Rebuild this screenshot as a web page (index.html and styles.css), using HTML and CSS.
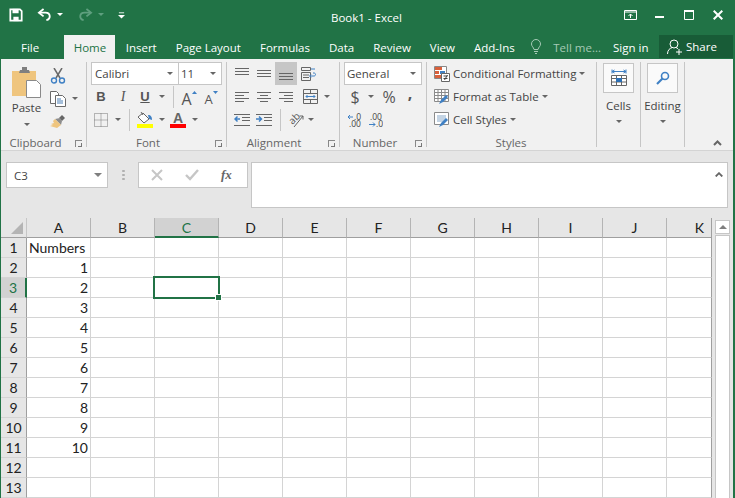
FILE: index.html
```html
<!DOCTYPE html>
<html lang="en">
<head>
    <meta charset="UTF-8">
    <title>Book1 - Excel</title>
    <link rel="stylesheet" href="styles.css">
</head>
<body>
<div class="window">
    <div class="titlebar">
        <div class="qat">
            <svg class="qat-save" width="14" height="14" viewBox="0 0 16 16"><path d="M1.500 1.500h11l2 2v11h-13z" fill="none" stroke="#fff" stroke-width="2"/><path d="M4 1h7v5H4z" fill="#fff"/><path d="M5 10h6v5H5z" fill="#fff"/></svg>
            <svg class="qat-undo" width="15" height="13" viewBox="0 0 16 14"><path d="M7 1L2 5l5 4" fill="none" stroke="#fff" stroke-width="2"/><path d="M3 5h6c6 0 6 7 1 8" fill="none" stroke="#fff" stroke-width="2"/></svg>
            <span class="caret caret-white"></span>
            <svg class="qat-redo" width="15" height="13" viewBox="0 0 16 14"><path d="M9 1l5 4-5 4" fill="none" stroke="#5f9f7f" stroke-width="2"/><path d="M13 5H7c-6 0-6 7-1 8" fill="none" stroke="#5f9f7f" stroke-width="2"/></svg>
            <span class="caret caret-dim"></span>
            <svg class="qat-more" width="7" height="8" viewBox="0 0 8 8"><path d="M1 1h6v1H1z" fill="#fff"/><path d="M0 4h8L4 8z" fill="#fff"/></svg>
        </div>
        <div class="title">Book1 - Excel</div>
        <div class="winbtns">
            <svg width="13" height="10" viewBox="0 0 13 10"><path d="M.5.500h12v9H.5z" fill="none" stroke="#fff"/><path d="M1 2h11" stroke="#fff"/><path d="M6.500 8V4M4.500 6l2-2 2 2" fill="none" stroke="#fff"/></svg>
            <svg class="win-min" width="9" height="2" viewBox="0 0 9 2"><path d="M0 0h9v2H0z" fill="#fff"/></svg>
            <svg class="win-max" width="10" height="10" viewBox="0 0 10 10"><path d="M.5 1.500h9v8h-9z" fill="none" stroke="#fff"/><path d="M0 0h10v2H0z" fill="#fff"/></svg>
            <svg class="win-close" width="10" height="10" viewBox="0 0 10 10"><path d="M.7.700l8.600 8.600M9.300.700L.7 9.300" stroke="#fff" stroke-width="2"/></svg>
        </div>
    </div>

    <div class="tabbar">
        <span class="tab tab-file">File</span>
        <span class="tab tab-active">Home</span>
        <span class="tab">Insert</span>
        <span class="tab">Page Layout</span>
        <span class="tab">Formulas</span>
        <span class="tab">Data</span>
        <span class="tab">Review</span>
        <span class="tab">View</span>
        <span class="tab">Add-Ins</span>
        <span class="tellme">
            <svg width="10" height="16" viewBox="0 0 10 16"><path d="M3 10.500C2.500 8 .5 7.500 .5 5a4.500 4.500 0 0 1 9 0c0 2.500-2 3-2.500 5.500z" fill="none" stroke="#a5c9b5"/><path d="M3 12.500h4M4 14.500h2" stroke="#a5c9b5"/></svg>
            Tell me...
        </span>
        <span class="signin">Sign in</span>
        <span class="share">
            <svg width="16" height="16" viewBox="0 0 16 16"><circle cx="7" cy="5" r="4" fill="none" stroke="#fff"/><path d="M.5 15c0-4 2.500-6 5-6.500M8.500 8.500c1 .2 1.800.6 2.500 1.200" fill="none" stroke="#fff"/><path d="M9 13h6M12 10v6" stroke="#fff"/></svg>
            Share
        </span>
    </div>

    <div class="ribbon">
        <div class="group group-clipboard">
            <div class="group-body clipboard-body">
                <div class="paste">
                    <svg width="30" height="32" viewBox="0 0 30 32"><path d="M0 4h24v25H0z" fill="#efc57e"/><path d="M8 3h2V0h5v3h2l1 3H7z" fill="#7f7f7f"/><path d="M14.500 13.500h10l4 4v13h-14z" fill="#fff" stroke="#8a8a8a"/></svg>
                    <span class="paste-label">Paste</span>
                    <span class="caret"></span>
                </div>
                <div class="clip-tools">
                    <div class="clip-row"><svg width="16" height="16" viewBox="0 0 16 16"><path d="M4 0l6 10M12 0L6 10" stroke="#6a6a6a" stroke-width="1.500" fill="none"/><circle cx="4" cy="12.500" r="2.500" fill="none" stroke="#3f80c4" stroke-width="1.400"/><circle cx="12" cy="12.500" r="2.500" fill="none" stroke="#3f80c4" stroke-width="1.400"/></svg></div>
                    <div class="clip-row"><svg width="16" height="16" viewBox="0 0 16 16"><path d="M.5.500h6l2 2v10h-8z" fill="#fff" stroke="#6a6a6a"/><path d="M5.500 4.500h7l3 3v8h-10z" fill="#fff" stroke="#6a6a6a"/><path d="M7 8h4M7 10h6M7 12h6" stroke="#4a7fb5"/></svg><span class="caret clip-caret"></span></div>
                    <div class="clip-row"><svg width="16" height="15" viewBox="0 0 16 15"><path d="M9 4l3-3 3 3-3 3z" fill="#666"/><path d="M5 5l5-1 2 3-1 4z" fill="#8d8d8d"/><path d="M5 5l6 6-4 3-7-2 3-1-2-1 3-1-1-2z" fill="#efc57e"/></svg></div>
                </div>
            </div>
            <div class="group-label">Clipboard<span class="launcher"></span></div>
        </div>

        <div class="group group-font">
            <div class="group-body">
                <div class="tool-row">
                    <div class="combo combo-font"><span>Calibri</span><span class="caret"></span></div>
                    <div class="combo combo-size"><span>11</span><span class="caret"></span></div>
                </div>
                <div class="tool-row">
                    <span class="btn btn-letter bold">B</span>
                    <span class="btn btn-letter italic">I</span>
                    <span class="btn btn-letter under">U</span>
                    <span class="caret-box w12"><span class="caret"></span></span>
                    <span class="vsep w10"></span>
                    <span class="btn btn-grow">A<svg width="5" height="3" viewBox="0 0 5 3"><path d="M0 3h5L2.500 0z" fill="#3f80c4"/></svg></span>
                    <span class="btn btn-shrink">A<svg width="5" height="3" viewBox="0 0 5 3"><path d="M0 0h5L2.500 3z" fill="#3f80c4"/></svg></span>
                </div>
                <div class="tool-row">
                    <span class="btn"><svg width="14" height="14" viewBox="0 0 14 14"><path d="M.5.500h13v13H.5zM7 .500v13M.5 7h13" fill="none" stroke="#777" stroke-dasharray="1 1"/></svg></span>
                    <span class="caret-box w12"><span class="caret"></span></span>
                    <span class="vsep w10"></span>
                    <span class="btn btn-color">
                        <svg width="16" height="12" viewBox="0 0 16 12"><path d="M6 1l6 6-5 4-6-6z" fill="#fff" stroke="#666"/><path d="M4 0l2 3" stroke="#666"/><path d="M11 3c3 0 4 2 4 5l-3-1z" fill="#3f80c4"/></svg>
                        <span class="colorbar colorbar-fill"></span>
                    </span>
                    <span class="caret-box w11"><span class="caret"></span></span>
                    <span class="btn btn-color">
                        <span class="font-a">A</span>
                        <span class="colorbar colorbar-font"></span>
                    </span>
                    <span class="caret-box w11"><span class="caret"></span></span>
                </div>
            </div>
            <div class="group-label">Font<span class="launcher"></span></div>
        </div>

        <div class="group group-align">
            <div class="group-body">
                <div class="tool-row">
                    <span class="btn"><svg width="14" height="14" viewBox="0 0 14 14"><path d="M0 1.500h14M0 4.500h14M0 7.500h14" stroke="#666"/></svg></span>
                    <span class="btn"><svg width="14" height="14" viewBox="0 0 14 14"><path d="M0 3.500h14M0 6.500h14M0 9.500h14" stroke="#666"/></svg></span>
                    <span class="btn btn-on"><svg width="14" height="14" viewBox="0 0 14 14"><path d="M0 6.500h14M0 9.500h14M0 12.500h14" stroke="#666"/></svg></span>
                    <span class="btn btn-wrap"><svg width="16" height="14" viewBox="0 0 16 14"><path d="M.5.500h9v3h-9zM.5 5.500h9v8h-9z" fill="none" stroke="#666"/><path d="M2 8h6M2 10.500h6" stroke="#666"/><path d="M10 2h4M9 9h4c2 0 2-3 0-3h-1M10 7.500L8.500 9l1.500 1.500" fill="none" stroke="#3f80c4"/></svg></span>
                </div>
                <div class="tool-row">
                    <span class="btn"><svg width="14" height="14" viewBox="0 0 14 14"><path d="M0 2.500h14M0 5.500h9M0 8.500h14M0 11.500h9" stroke="#666"/></svg></span>
                    <span class="btn"><svg width="14" height="14" viewBox="0 0 14 14"><path d="M0 2.500h14M3 5.500h8M0 8.500h14M3 11.500h8" stroke="#666"/></svg></span>
                    <span class="btn"><svg width="14" height="14" viewBox="0 0 14 14"><path d="M0 2.500h14M5 5.500h9M0 8.500h14M5 11.500h9" stroke="#666"/></svg></span>
                    <span class="btn btn-merge"><svg width="15" height="15" viewBox="0 0 15 15"><path d="M.5.500h14v14H.5zM.5 4.500h14M.5 10.500h14M7.500.500v4M7.500 10.500v4" fill="none" stroke="#666"/><path d="M3 7.500h9M4.500 6L3 7.500 4.500 9M10.500 6L12 7.500 10.500 9" fill="none" stroke="#3f80c4"/></svg></span>
                    <span class="caret-box w12"><span class="caret"></span></span>
                </div>
                <div class="tool-row">
                    <span class="btn"><svg width="16" height="12" viewBox="0 0 16 12"><path d="M0 .500h16M8 3.500h8M8 6.500h8M0 11.500h16" stroke="#666"/><path d="M6 5H1.500M3.500 2.500L1 5l2.500 2.500" fill="none" stroke="#3f80c4" stroke-width="1.500"/></svg></span>
                    <span class="btn"><svg width="16" height="12" viewBox="0 0 16 12"><path d="M0 .500h16M8 3.500h8M8 6.500h8M0 11.500h16" stroke="#666"/><path d="M0 5h5M3 2.500L5.500 5 3 7.500" fill="none" stroke="#3f80c4" stroke-width="1.500"/></svg></span>
                    <span class="vsep w10"></span>
                    <span class="btn btn-orient"><span class="orient-text">ab</span><svg width="16" height="16" viewBox="0 0 16 16"><path d="M6 15L15 4M11.500 4H15v3.500" fill="none" stroke="#666"/></svg></span>
                    <span class="caret-box w8"><span class="caret"></span></span>
                </div>
            </div>
            <div class="group-label">Alignment<span class="launcher"></span></div>
        </div>

        <div class="group group-number">
            <div class="group-body">
                <div class="tool-row">
                    <div class="combo combo-general"><span>General</span><span class="caret"></span></div>
                </div>
                <div class="tool-row">
                    <span class="btn btn-sym">$</span>
                    <span class="caret-box w10"><span class="caret"></span></span>
                    <span class="btn btn-sym btn-pct">%</span>
                    <span class="btn btn-sym btn-comma">,</span>
                </div>
                <div class="tool-row decimals">
                    <svg width="18" height="18" viewBox="0 0 18 18"><text x="7" y="9" class="dec-text">.0</text><text x="2" y="16" class="dec-text">.00</text><path d="M6 6H1M3 4L1 6l2 2" fill="none" stroke="#3f80c4"/></svg>
                    <svg width="18" height="18" viewBox="0 0 18 18"><text x="5" y="9" class="dec-text">.00</text><text x="11" y="16" class="dec-text">.0</text><path d="M4 13.500h6M8 11.500l2 2-2 2" fill="none" stroke="#3f80c4"/></svg>
                </div>
            </div>
            <div class="group-label">Number<span class="launcher"></span></div>
        </div>

        <div class="group group-styles">
            <div class="group-body">
                <div class="style-row">
                    <svg width="16" height="16" viewBox="0 0 16 16"><path d="M.5.500h12v12H.5z" fill="#fff" stroke="#888"/><path d="M1 1h7v3H1z" fill="#d9603b"/><path d="M1 5h4v3H1zM1 9h6v3H1z" fill="#d9603b"/><path d="M6 5h5v3H6z" fill="#3f80c4"/><path d="M7.500 7.500h8v8h-8z" fill="#fff" stroke="#666"/><path d="M9.500 10h4M9.500 12.500h4M10.500 14l3-5" stroke="#444" fill="none"/></svg>
                    <span>Conditional Formatting</span><span class="caret style-caret"></span>
                </div>
                <div class="style-row">
                    <svg width="16" height="16" viewBox="0 0 16 16"><path d="M.5.500h14v12H.5zM.5 3.500h14M.5 6.500h14M.5 9.500h14M4 .500v12M7.500 .500v12M11 .500v12" fill="#fff" stroke="#8a8a8a"/><path d="M5 15l2-4 5-5 2 2-5 5z" fill="#3f80c4"/></svg>
                    <span>Format as Table</span><span class="caret style-caret"></span>
                </div>
                <div class="style-row">
                    <svg width="16" height="16" viewBox="0 0 16 16"><path d="M.5.500h14v12H.5z" fill="#fff" stroke="#8a8a8a"/><path d="M3 3h9v7H3z" fill="#c4d4e4"/><path d="M5 15l2-4 5-5 2 2-5 5z" fill="#3f80c4"/></svg>
                    <span>Cell Styles</span><span class="caret style-caret"></span>
                </div>
            </div>
            <div class="group-label">Styles</div>
        </div>

        <div class="group group-big">
            <div class="big-btn"><svg width="16" height="18" viewBox="0 0 16 18"><path d="M1 2.500h14M1 .500v4M15 .500v4M3.500 1L1 2.500 3.500 4M12.500 1L15 2.500 12.500 4" fill="none" stroke="#3f80c4"/><path d="M.5 6.500h15v10H.5zM.5 9.500h15M.5 13h15M5.500 6.500v10M10.500 6.500v10" fill="#fff" stroke="#666"/><path d="M5 9h6v4H5z" fill="#2b6fb5"/></svg></div>
            <div class="big-label">Cells</div>
            <span class="caret"></span>
        </div>
        <div class="group group-big">
            <div class="big-btn"><svg width="14" height="14" viewBox="0 0 14 14"><circle cx="9" cy="5" r="3.500" fill="none" stroke="#3f80c4" stroke-width="1.600"/><path d="M6.500 7.500L1 13" stroke="#3f80c4" stroke-width="2.200"/></svg></div>
            <div class="big-label">Editing</div>
            <span class="caret"></span>
        </div>
        <div class="collapse"><svg width="9" height="6" viewBox="0 0 9 6"><path d="M1 5l3.500-3.500L8 5" fill="none" stroke="#666" stroke-width="2"/></svg></div>
    </div>

    <div class="formulabar">
        <div class="namebox"><span>C3</span><span class="caret caret-big"></span></div>
        <div class="grip"></div>
        <div class="fx-box">
            <svg width="12" height="12" viewBox="0 0 12 12"><path d="M1 1l10 10M11 1L1 11" stroke="#c6c6c6" stroke-width="2"/></svg>
            <svg width="14" height="12" viewBox="0 0 14 12"><path d="M1 6l4 4 8-9" fill="none" stroke="#c6c6c6" stroke-width="2.400"/></svg>
            <span class="fx">fx</span>
        </div>
        <div class="formula-input"><svg width="8" height="5" viewBox="0 0 8 5"><path d="M.7 4.500L4 1.200l3.300 3.300" fill="none" stroke="#666" stroke-width="1.800"/></svg></div>
    </div>

    <div class="sheet">
        <table class="grid">
            <thead>
                <tr>
                    <th class="corner"><span class="corner-mark"></span></th>
                    <th>A</th><th>B</th><th class="col-on">C</th><th>D</th><th>E</th><th>F</th><th>G</th><th>H</th><th>I</th><th>J</th><th class="col-k">K</th>
                </tr>
            </thead>
            <tbody>
                <tr><th>1</th><td class="txt">Numbers</td><td></td><td></td><td></td><td></td><td></td><td></td><td></td><td></td><td></td><td></td></tr>
                <tr><th>2</th><td>1</td><td></td><td></td><td></td><td></td><td></td><td></td><td></td><td></td><td></td><td></td></tr>
                <tr><th class="row-on">3</th><td>2</td><td></td><td class="cell-on"><span class="handle"></span></td><td></td><td></td><td></td><td></td><td></td><td></td><td></td><td></td></tr>
                <tr><th>4</th><td>3</td><td></td><td></td><td></td><td></td><td></td><td></td><td></td><td></td><td></td><td></td></tr>
                <tr><th>5</th><td>4</td><td></td><td></td><td></td><td></td><td></td><td></td><td></td><td></td><td></td><td></td></tr>
                <tr><th>6</th><td>5</td><td></td><td></td><td></td><td></td><td></td><td></td><td></td><td></td><td></td><td></td></tr>
                <tr><th>7</th><td>6</td><td></td><td></td><td></td><td></td><td></td><td></td><td></td><td></td><td></td><td></td></tr>
                <tr><th>8</th><td>7</td><td></td><td></td><td></td><td></td><td></td><td></td><td></td><td></td><td></td><td></td></tr>
                <tr><th>9</th><td>8</td><td></td><td></td><td></td><td></td><td></td><td></td><td></td><td></td><td></td><td></td></tr>
                <tr><th>10</th><td>9</td><td></td><td></td><td></td><td></td><td></td><td></td><td></td><td></td><td></td><td></td></tr>
                <tr><th>11</th><td>10</td><td></td><td></td><td></td><td></td><td></td><td></td><td></td><td></td><td></td><td></td></tr>
                <tr><th>12</th><td></td><td></td><td></td><td></td><td></td><td></td><td></td><td></td><td></td><td></td><td></td></tr>
                <tr><th>13</th><td></td><td></td><td></td><td></td><td></td><td></td><td></td><td></td><td></td><td></td><td></td></tr>
            </tbody>
        </table>
        <div class="scrollbar">
            <div class="scroll-up"><span class="caret-up"></span></div>
            <div class="scroll-track"></div>
        </div>
    </div>
</div>
</body>
</html>
```

FILE: styles.css
```css
html, body {
    margin: 0;
    height: 100%;
    overflow: hidden;
}
*, *::before, *::after {
    box-sizing: border-box;
}
body {
    font-family: "Open Sans", "Noto Sans", sans-serif;
    font-size: 11.5px;
    color: #444;
}
svg {
    display: block;
    flex: none;
}
.window {
    height: 498px;
    width: 735px;
    display: flex;
    flex-direction: column;
    background: #e6e6e6;
    border-left: 1px solid #217346;
    border-right: 2px solid #217346;
    overflow: hidden;
}

/* title bar */
.titlebar {
    height: 35px;
    flex: none;
    display: flex;
    align-items: center;
    background: #217346;
    color: #fff;
}
.qat {
    width: 330px;
    display: flex;
    align-items: center;
    padding-left: 8px;
    padding-bottom: 6px;
}
.qat-undo { margin-left: 14px; }
.qat-redo { margin-left: 15px; }
.qat-more { margin-left: 14px; }
.qat .caret { margin-left: 5px; }
.title {
    font-size: 11.5px;
}
.winbtns {
    margin-left: auto;
    display: flex;
    align-items: center;
    padding-right: 10px;
    padding-bottom: 6px;
}
.win-min { margin-left: 18px; margin-top: 4px; }
.win-max { margin-left: 20px; }
.win-close { margin-left: 19px; }

/* tabs */
.tabbar {
    height: 24px;
    flex: none;
    display: flex;
    align-items: stretch;
    background: #217346;
    color: #fff;
    font-size: 11.5px;
}
.tab {
    display: flex;
    align-items: center;
    padding: 0 9.5px;
}
.tab-file {
    margin-left: 10.5px;
    margin-right: 15.5px;
}
.tab-active {
    background: #f1f1f1;
    color: #217346;
    width: 51px;
    margin-right: 1px;
}
.tellme {
    display: flex;
    align-items: center;
    gap: 12px;
    margin-left: 7px;
    color: #a5c9b5;
}
.signin {
    display: flex;
    align-items: center;
    margin-left: 12px;
}
.share {
    display: flex;
    align-items: center;
    gap: 3px;
    margin-left: auto;
    width: 74px;
    height: 23px;
    padding-left: 8px;
    background: #185c37;
}

/* ribbon */
.ribbon {
    height: 92px;
    flex: none;
    display: flex;
    padding-top: 3px;
    background: #f1f1f1;
    border-bottom: 1px solid #d4d4d4;
}
.group {
    display: flex;
    flex-direction: column;
    height: 85px;
    border-right: 1px solid #c6c6c6;
}
.group-body {
    height: 73px;
}
.group-label {
    height: 12px;
    font-size: 11.5px;
    line-height: 16px;
    text-align: center;
    color: #666;
    position: relative;
}
.launcher {
    position: absolute;
    right: 4px;
    top: 5px;
    width: 7px;
    height: 7px;
    border-left: 1px solid #888;
    border-top: 1px solid #888;
}
.launcher::after {
    content: "";
    position: absolute;
    right: 0;
    bottom: 0;
    width: 4px;
    height: 4px;
    border-right: 1px solid #777;
    border-bottom: 1px solid #777;
}
.group-clipboard { width: 86px; }
.group-clipboard .group-label { padding-right: 16px; }
.group-font { width: 140px; padding-left: 3px; }
.group-font .group-label { padding-right: 20px; }
.group-align { width: 113px; padding-left: 4px; }
.group-align .group-label { padding-right: 22px; }
.group-number { width: 87px; padding-left: 4px; }
.group-number .group-label { padding-right: 20px; }
.group-styles { width: 170px; padding-left: 7px; }
.group-styles .group-label { padding-right: 8px; }
.group-big {
    width: 44px;
    align-items: center;
    padding-top: 1px;
}
.big-btn {
    width: 31px;
    height: 30px;
    display: flex;
    align-items: center;
    justify-content: center;
    background: #fafafa;
    border: 1px solid #c6c6c6;
}
.big-label {
    margin-top: 4px;
    height: 18px;
    line-height: 18px;
    margin-bottom: 5px;
    white-space: nowrap;
}
.collapse {
    margin-left: auto;
    margin-right: 11px;
    margin-top: 78px;
}

.caret {
    display: inline-block;
    flex: none;
    width: 0;
    height: 0;
    border-left: 3px solid transparent;
    border-right: 3px solid transparent;
    border-top: 3px solid #666;
}
.caret-white { border-top-color: #fff; }
.caret-dim { border-top-color: #5f9f7f; }
.caret-big {
    border-left-width: 4px;
    border-right-width: 4px;
    border-top-width: 4px;
    border-top-color: #7f7f7f;
}
.caret-box {
    display: flex;
    align-items: center;
    justify-content: center;
    height: 22px;
}
.w8 { width: 8px; }
.w10 { width: 10px; }
.w11 { width: 11px; }
.w12 { width: 12px; }

.clipboard-body {
    display: flex;
}
.paste {
    width: 48px;
    display: flex;
    flex-direction: column;
    align-items: center;
    padding-top: 5px;
    padding-left: 3px;
}
.paste-label {
    margin-top: 1px;
    margin-bottom: 7px;
    line-height: 16px;
}
.clip-tools {
    display: flex;
    flex-direction: column;
    padding-top: 2px;
}
.clip-row {
    height: 23px;
    display: flex;
    align-items: center;
    padding-left: 1px;
}
.clip-caret { margin-left: 6px; }

.tool-row {
    height: 23px;
    display: flex;
    align-items: center;
}
.combo {
    height: 23px;
    display: flex;
    align-items: center;
    justify-content: space-between;
    padding: 0 5px 0 3px;
    background: #fff;
    border: 1px solid #c6c6c6;
    color: #444;
}
.combo-font { width: 88px; margin-left: 1px; }
.combo-size { width: 43px; border-left: 0; padding-left: 2px; }
.combo-general { width: 78px; padding-left: 2px; }

.btn {
    width: 22px;
    height: 22px;
    flex: none;
    display: flex;
    align-items: center;
    justify-content: center;
}
.btn-on {
    height: 23px;
    background: #c6c6c6;
}
.btn-wrap { margin-left: 1px; }
.btn-merge { margin-left: 2px; }
.btn-letter {
    font-family: "Liberation Serif", serif;
    font-size: 14px;
    color: #555;
}
.bold { font-family: "Liberation Sans", sans-serif; font-weight: 700; font-size: 13px; }
.italic { font-style: italic; }
.under { font-family: "Liberation Sans", sans-serif; font-weight: 700; font-size: 13px; text-decoration: underline; }
.btn-grow, .btn-shrink {
    font-size: 16px;
    line-height: 18px;
    align-items: flex-end;
    color: #555;
}
.btn-shrink { font-size: 13px; }
.btn-grow svg, .btn-shrink svg { margin-bottom: 14px; }
.vsep {
    height: 22px;
    background: linear-gradient(#c6c6c6, #c6c6c6) center / 1px 100% no-repeat;
}
.btn-color {
    flex-direction: column;
    justify-content: flex-start;
    padding-top: 3px;
}
.colorbar {
    width: 16px;
    height: 4px;
    flex: none;
}
.colorbar-fill { background: #ff0; }
.colorbar-font { background: #f00; }
.font-a {
    height: 12px;
    line-height: 12px;
    font-family: "Liberation Sans", sans-serif;
    font-weight: 700;
    font-size: 14px;
    color: #666;
}
.btn-sym {
    font-size: 16px;
    color: #555;
}
.btn-pct { margin-left: 2px; }
.btn-comma { margin-left: -1px; font-weight: 700; padding-bottom: 8px; }
.decimals {
    padding-left: 3px;
}
.dec-text {
    font-family: "Open Sans", sans-serif;
    font-size: 8.5px;
    fill: #444;
}
.btn-orient {
    position: relative;
}
.orient-text {
    font-size: 10px;
    line-height: 10px;
    color: #555;
    transform: rotate(-45deg);
    margin-right: -12px;
    margin-bottom: 4px;
}
.style-row {
    height: 23px;
    display: flex;
    align-items: center;
}
.style-row svg { margin-right: 3px; }
.style-caret { margin-left: 3px; }

/* formula bar */
.formulabar {
    height: 67px;
    flex: none;
    display: flex;
    align-items: flex-start;
    padding: 11px 5px 0 5px;
    background: #e6e6e6;
}
.namebox {
    width: 102px;
    height: 26px;
    display: flex;
    align-items: center;
    justify-content: space-between;
    padding: 0 5px 0 7px;
    background: #fff;
    border: 1px solid #c6c6c6;
}
.grip {
    width: 30px;
    height: 26px;
    background: radial-gradient(circle, #b0b0b0 1px, transparent 1.5px) center / 3px 4px repeat-y;
    background-clip: content-box;
    padding: 6px 0;
}
.fx-box {
    width: 110px;
    height: 26px;
    display: flex;
    align-items: center;
    padding-left: 12px;
    background: #fff;
    border: 1px solid #c6c6c6;
}
.fx-box svg + svg { margin-left: 22px; }
.fx {
    margin-left: 22px;
    font-family: "Liberation Serif", serif;
    font-style: italic;
    font-weight: 700;
    font-size: 13px;
    color: #666;
}
.formula-input {
    width: 477px;
    height: 46px;
    margin-left: 3px;
    display: flex;
    justify-content: flex-end;
    padding: 9px 4px 0 0;
    background: #fff;
    border: 1px solid #c6c6c6;
}

/* sheet */
.sheet {
    flex: 1;
    display: flex;
    align-items: flex-start;
    background: #e6e6e6;
}
.grid {
    width: 711px;
    table-layout: fixed;
    border-collapse: separate;
    border-spacing: 0;
    font-family: "Lato", sans-serif;
    font-size: 14px;
    color: #222;
    background: #fff;
}
.grid th {
    font-weight: 400;
    background: #e6e6e6;
    padding: 0;
    text-align: center;
}
.grid thead th {
    width: 64px;
    height: 20px;
    border-right: 1px solid #b4b4b4;
    border-bottom: 1px solid #9f9f9f;
}
.grid thead .corner {
    width: 26px;
    position: relative;
    border-right: 1px solid #c6c6c6;
}
.corner-mark {
    position: absolute;
    right: 3px;
    bottom: 3px;
    width: 0;
    height: 0;
    border-left: 12px solid transparent;
    border-bottom: 12px solid #b4b4b4;
}
.grid thead .col-k {
    width: 45px;
    border-right: 1px solid #9f9f9f;
    text-align: right;
    padding-right: 7px;
}
.grid thead .col-on {
    background: #d2d2d2;
    color: #217346;
    border-bottom: 2px solid #217346;
}
.grid tbody th {
    height: 20px;
    border-right: 1px solid #9f9f9f;
    border-bottom: 1px solid #d4d4d4;
}
.grid tbody .row-on {
    background: #d2d2d2;
    color: #217346;
    border-right: 2px solid #217346;
}
.grid td {
    height: 20px;
    padding: 0 2px 0 0;
    line-height: 19px;
    text-align: right;
    border-right: 1px solid #d4d4d4;
    border-bottom: 1px solid #d4d4d4;
}
.grid td.txt {
    text-align: left;
    padding-left: 2px;
}
.grid td:last-child {
    border-right: 1px solid #9f9f9f;
}
.cell-on {
    position: relative;
}
.cell-on::after {
    content: "";
    position: absolute;
    left: -2px;
    top: -2px;
    right: -2px;
    bottom: -2px;
    border: 2px solid #217346;
}
.handle {
    position: absolute;
    right: -4px;
    bottom: -4px;
    width: 7px;
    height: 7px;
    background: #217346;
    border: 1px solid #fff;
    z-index: 1;
}
.scrollbar {
    width: 15px;
    margin-left: 3px;
    margin-top: 2px;
    display: flex;
    flex-direction: column;
}
.scroll-up {
    height: 14px;
    display: flex;
    align-items: center;
    justify-content: center;
    background: #fff;
    border: 1px solid #c6c6c6;
}
.caret-up {
    width: 0;
    height: 0;
    border-left: 4px solid transparent;
    border-right: 4px solid transparent;
    border-bottom: 4px solid #7f7f7f;
}
.scroll-track {
    height: 300px;
    margin-top: 1px;
    background: #fff;
    border: 1px solid #c6c6c6;
    border-bottom: 0;
}
```
